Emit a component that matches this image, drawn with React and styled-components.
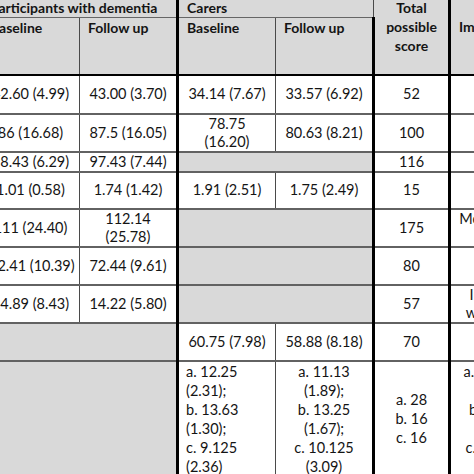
import styled, { createGlobalStyle } from "styled-components";

const GlobalStyle = createGlobalStyle`
  body {
    margin: 0;
    background: #fff;
  }
`;

const Frame = styled.div`
  width: 474px;
  height: 474px;
  overflow: hidden;
  background: #fff;
`;

const Table = styled.table`
  width: 598px;
  border-collapse: collapse;
  table-layout: fixed;
  margin: -3px 0 0 -19px;
  font-family: Lato, "Open Sans", sans-serif;
  color: #141414;
`;

const HeadRow = styled.tr`
  height: ${(p) => p.$h}px;
`;

const Th = styled.th`
  background: #d9d9d9;
  font-size: 14px;
  line-height: 19px;
  font-weight: bold;
  text-align: ${(p) => (p.$center ? "center" : "left")};
  vertical-align: ${(p) => (p.$middle ? "middle" : "top")};
  padding: 0 8px;
  white-space: nowrap;
  border: 1px solid #4a4a4a;
  border-right: ${(p) => (p.$thick ? "3px solid #000" : "1px solid #4a4a4a")};
  border-bottom: ${(p) => (p.$base ? "2px solid #000" : "1px solid #666")};
`;

const Row = styled.tr`
  height: ${(p) => p.$h}px;
`;

const Td = styled.td`
  background: ${(p) => (p.$gray ? "#d9d9d9" : "#fff")};
  font-size: 14.5px;
  line-height: ${(p) => p.$lh || 18}px;
  text-align: ${(p) => (p.$left ? "left" : "center")};
  vertical-align: middle;
  padding: 0 7px;
  white-space: nowrap;
  border-top: 2px solid #626262;
  border-bottom: 2px solid #626262;
  border-left: 1px solid #4a4a4a;
  border-right: ${(p) => (p.$thick ? "3px solid #000" : "1px solid #4a4a4a")};
`;

const Lines = ({ items }) =>
  items.map((line, i) => (
    <span key={i}>
      {line}
      {i < items.length - 1 && <br />}
    </span>
  ));

export default function App() {
  return (
    <Frame>
      <GlobalStyle />
      <Table>
        <colgroup>
          <col style={{ width: 98 }} />
          <col style={{ width: 98 }} />
          <col style={{ width: 98 }} />
          <col style={{ width: 98 }} />
          <col style={{ width: 76 }} />
          <col style={{ width: 130 }} />
        </colgroup>
        <thead>
          <HeadRow $h={18}>
            <Th colSpan={2} $middle $thick>
              Participants with dementia
            </Th>
            <Th colSpan={2} $middle>
              Carers
            </Th>
            <Th rowSpan={2} $center $thick $base>
              Total
              <br />
              possible
              <br />
              score
            </Th>
            <Th rowSpan={2} $center $middle $base>
              Improvement with
              <br />
              change
            </Th>
          </HeadRow>
          <HeadRow $h={57}>
            <Th $base>Baseline</Th>
            <Th $base $thick>Follow up</Th>
            <Th $base>Baseline</Th>
            <Th $base $thick>Follow up</Th>
          </HeadRow>
        </thead>
        <tbody>
          <Row $h={39}>
            <Td>42.60 (4.99)</Td>
            <Td $thick>43.00 (3.70)</Td>
            <Td>34.14 (7.67)</Td>
            <Td $thick>33.57 (6.92)</Td>
            <Td $thick>52</Td>
            <Td />
          </Row>
          <Row $h={37}>
            <Td>86 (16.68)</Td>
            <Td $thick>87.5 (16.05)</Td>
            <Td>
              <Lines items={["78.75", "(16.20)"]} />
            </Td>
            <Td $thick>80.63 (8.21)</Td>
            <Td $thick>100</Td>
            <Td />
          </Row>
          <Row $h={19}>
            <Td>98.43 (6.29)</Td>
            <Td $thick>97.43 (7.44)</Td>
            <Td colSpan={2} $gray $thick />
            <Td $thick>116</Td>
            <Td />
          </Row>
          <Row $h={37}>
            <Td>1.01 (0.58)</Td>
            <Td $thick>1.74 (1.42)</Td>
            <Td>1.91 (2.51)</Td>
            <Td $thick>1.75 (2.49)</Td>
            <Td $thick>15</Td>
            <Td />
          </Row>
          <Row $h={37}>
            <Td>111 (24.40)</Td>
            <Td $thick>
              <Lines items={["112.14", "(25.78)"]} />
            </Td>
            <Td colSpan={2} $gray $thick />
            <Td $thick>175</Td>
            <Td>
              <Lines items={["Moderate decline", "in function"]} />
            </Td>
          </Row>
          <Row $h={38}>
            <Td>72.41 (10.39)</Td>
            <Td $thick>72.44 (9.61)</Td>
            <Td colSpan={2} $gray $thick />
            <Td $thick>80</Td>
            <Td />
          </Row>
          <Row $h={37}>
            <Td>14.89 (8.43)</Td>
            <Td $thick>14.22 (5.80)</Td>
            <Td colSpan={2} $gray $thick />
            <Td $thick>57</Td>
            <Td>
              <Lines items={["Improvements", "with low scores"]} />
            </Td>
          </Row>
          <Row $h={38}>
            <Td colSpan={2} $gray $thick />
            <Td>60.75 (7.98)</Td>
            <Td $thick>58.88 (8.18)</Td>
            <Td $thick>70</Td>
            <Td />
          </Row>
          <Row $h={114}>
            <Td colSpan={2} $gray $thick />
            <Td $left $lh={19}>
              <Lines
                items={["a. 12.25", "(2.31);", "b. 13.63", "(1.30);", "c. 9.125", "(2.36)"]}
              />
            </Td>
            <Td $thick $lh={19}>
              <Lines
                items={["a. 11.13", "(1.89);", "b. 13.25", "(1.67);", "c. 10.125", "(3.09)"]}
              />
            </Td>
            <Td $thick $lh={19}>
              <Lines items={["a. 28", "b. 16", "c. 16"]} />
            </Td>
            <Td $lh={19}>
              <Lines
                items={[
                  "a. Higher better;",
                  "(max 28)",
                  "b. Lower score",
                  "(max 16)",
                  "c. Higher better",
                  "(max 16)",
                ]}
              />
            </Td>
          </Row>
        </tbody>
      </Table>
    </Frame>
  );
}
